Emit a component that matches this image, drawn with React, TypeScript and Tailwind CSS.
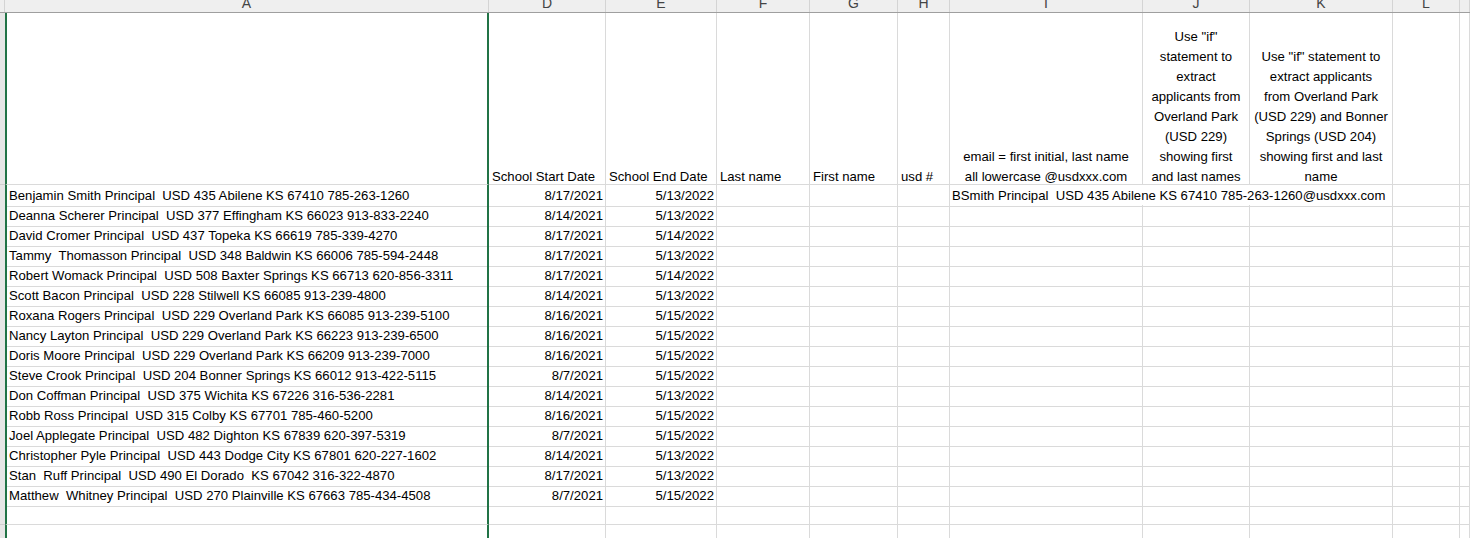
import React from 'react'

type Row = {
  a: string
  start: string
  end: string
  email?: string
}

const rows: Row[] = [
  { a: 'Benjamin Smith Principal  USD 435 Abilene KS 67410 785-263-1260', start: '8/17/2021', end: '5/13/2022', email: 'BSmith Principal  USD 435 Abilene KS 67410 785-263-1260@usdxxx.com' },
  { a: 'Deanna Scherer Principal  USD 377 Effingham KS 66023 913-833-2240', start: '8/14/2021', end: '5/13/2022' },
  { a: 'David Cromer Principal  USD 437 Topeka KS 66619 785-339-4270', start: '8/17/2021', end: '5/14/2022' },
  { a: 'Tammy  Thomasson Principal  USD 348 Baldwin KS 66006 785-594-2448', start: '8/17/2021', end: '5/13/2022' },
  { a: 'Robert Womack Principal  USD 508 Baxter Springs KS 66713 620-856-3311', start: '8/17/2021', end: '5/14/2022' },
  { a: 'Scott Bacon Principal  USD 228 Stilwell KS 66085 913-239-4800', start: '8/14/2021', end: '5/13/2022' },
  { a: 'Roxana Rogers Principal  USD 229 Overland Park KS 66085 913-239-5100', start: '8/16/2021', end: '5/15/2022' },
  { a: 'Nancy Layton Principal  USD 229 Overland Park KS 66223 913-239-6500', start: '8/16/2021', end: '5/15/2022' },
  { a: 'Doris Moore Principal  USD 229 Overland Park KS 66209 913-239-7000', start: '8/16/2021', end: '5/15/2022' },
  { a: 'Steve Crook Principal  USD 204 Bonner Springs KS 66012 913-422-5115', start: '8/7/2021', end: '5/15/2022' },
  { a: 'Don Coffman Principal  USD 375 Wichita KS 67226 316-536-2281', start: '8/14/2021', end: '5/13/2022' },
  { a: 'Robb Ross Principal  USD 315 Colby KS 67701 785-460-5200', start: '8/16/2021', end: '5/15/2022' },
  { a: 'Joel Applegate Principal  USD 482 Dighton KS 67839 620-397-5319', start: '8/7/2021', end: '5/15/2022' },
  { a: 'Christopher Pyle Principal  USD 443 Dodge City KS 67801 620-227-1602', start: '8/14/2021', end: '5/13/2022' },
  { a: 'Stan  Ruff Principal  USD 490 El Dorado  KS 67042 316-322-4870', start: '8/17/2021', end: '5/13/2022' },
  { a: 'Matthew  Whitney Principal  USD 270 Plainville KS 67663 785-434-4508', start: '8/7/2021', end: '5/15/2022' },
  { a: '', start: '', end: '' },
  { a: '', start: '', end: '' },
]

const letters = ['A', 'D', 'E', 'F', 'G', 'H', 'I', 'J', 'K', 'L', '']

// column widths match the sheet: row-strip, A, D..L, rest
const grid = 'grid grid-cols-[5px_484px_117px_111px_93px_88px_52px_193px_107px_143px_67px_1fr]'
const cell = 'border-r border-b border-[#dadada]'
const colA = 'border-x-2 border-x-[#217346] border-b border-b-[#dadada]'

function Multi({ lines }: { lines: string[] }) {
  return (
    <div className="-mb-[3px]">
      {lines.map((l, i) => (
        <div key={i}>{l}</div>
      ))}
    </div>
  )
}

export default function App() {
  return (
    <div
      className="h-[538px] w-[1470px] overflow-hidden bg-white text-[13.15px] text-black"
      style={{ fontFamily: '"Liberation Sans", Arial, sans-serif' }}
    >
      {/* column headers (top is cut off) */}
      <div className={`${grid} h-[13px] border-b border-[#9f9f9f] bg-[#efefef] text-[#444]`}>
        <div className="border-r border-[#d4d4d4]" />
        {letters.map((l, i) => (
          <div
            key={i}
            className="flex justify-center overflow-hidden border-r border-[#d4d4d4] text-[14px] leading-[20px]"
          >
            <span className="-mt-[7px]">{l}</span>
          </div>
        ))}
      </div>

      {/* row 1: tall wrapped header texts */}
      <div className={`${grid} h-[172px] leading-[20px]`}>
        <div className="border-b border-[#cfcfcf] bg-[#e6e6e6]" />
        <div className={colA} />
        <div className={`${cell} flex items-end pl-[3px] whitespace-nowrap`}>
          <span className="-mb-[3px]">School Start Date</span>
        </div>
        <div className={`${cell} flex items-end pl-[3px] whitespace-nowrap`}>
          <span className="-mb-[3px]">School End Date</span>
        </div>
        <div className={`${cell} flex items-end pl-[3px]`}>
          <span className="-mb-[3px]">Last name</span>
        </div>
        <div className={`${cell} flex items-end pl-[3px]`}>
          <span className="-mb-[3px]">First name</span>
        </div>
        <div className={`${cell} flex items-end pl-[3px]`}>
          <span className="-mb-[3px]">usd #</span>
        </div>
        <div className={`${cell} flex flex-col justify-end text-center`}>
          <Multi lines={['email = first initial, last name', 'all lowercase @usdxxx.com']} />
        </div>
        <div className={`${cell} flex flex-col justify-end text-center`}>
          <Multi
            lines={['Use "if"', 'statement to', 'extract', 'applicants from', 'Overland Park', '(USD 229)', 'showing first', 'and last names']}
          />
        </div>
        <div className={`${cell} flex flex-col justify-end text-center`}>
          <Multi
            lines={['Use "if" statement to', 'extract applicants', 'from Overland Park', '(USD 229) and Bonner', 'Springs (USD 204)', 'showing first and last', 'name']}
          />
        </div>
        <div className={cell} />
        <div className={cell} />
      </div>

      {/* data rows */}
      {rows.map((r, i) => (
        <div key={i} className={`${grid} h-[20px] leading-[20px]`}>
          <div className="border-b border-[#cfcfcf] bg-[#e6e6e6]" />
          <div className={`${colA} whitespace-pre pt-[1px] pl-[2px]`}>{r.a}</div>
          <div className={`${cell} pt-[1px] pr-[2px] text-right`}>{r.start}</div>
          <div className={`${cell} pt-[1px] pr-[2px] text-right`}>{r.end}</div>
          <div className={cell} />
          <div className={cell} />
          <div className={cell} />
          {r.email ? (
            <div className={`${cell} col-span-3 whitespace-pre pt-[1px] pl-[2px]`}>{r.email}</div>
          ) : (
            <>
              <div className={cell} />
              <div className={cell} />
              <div className={cell} />
            </>
          )}
          <div className={cell} />
          <div className={cell} />
        </div>
      ))}
    </div>
  )
}
